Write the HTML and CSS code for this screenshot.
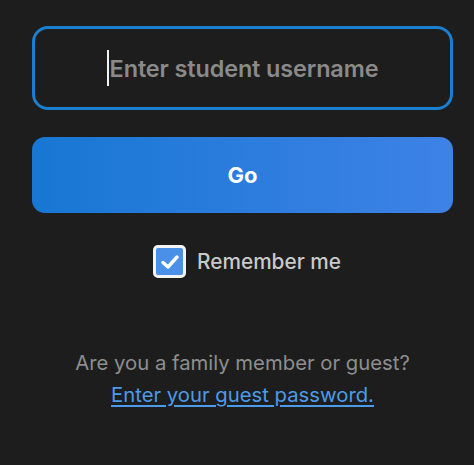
FILE: index.html
```html
<!DOCTYPE html>
<html lang="en">

<head>
    <meta charset="UTF-8">
    <meta name="viewport" content="width=device-width, initial-scale=1.0">
    <title>Student login</title>
    <link rel="stylesheet" href="styles.css">
</head>

<body>
    <section class="login">
        <div class="field">
            <span class="caret"></span>
            <span class="placeholder">Enter student username</span>
        </div>

        <button class="go" type="button">Go</button>

        <label class="remember">
            <span class="box">
                <svg width="20" height="16" viewBox="0 0 20 16">
                    <path d="M3 8.5 L8 13 L17 3" fill="none" stroke="#fff" stroke-width="3.4" stroke-linecap="round" stroke-linejoin="round" />
                </svg>
            </span>
            <span class="remember-text">Remember me</span>
        </label>

        <p class="guest">
            Are you a family member or guest?<br />
            <a href="#" class="guest-link">Enter your guest password.</a>
        </p>
    </section>
</body>

</html>
```

FILE: styles.css
```css
body {
    margin: 0;
    background-color: #1d1d1d;
    font-family: Inter, "Noto Sans", sans-serif;
}

.login {
    width: 421px;
    padding: 26px 0 0 32px;
    display: flex;
    flex-direction: column;
    align-items: stretch;
}

.field {
    box-sizing: border-box;
    height: 84px;
    border: 3px solid #1a7fcf;
    border-radius: 16px;
    display: flex;
    align-items: center;
    justify-content: center;
}

.caret {
    width: 2px;
    height: 36px;
    background-color: #f2f2f2;
    margin-right: 1px;
}

.placeholder {
    color: #8a8a8a;
    font-size: 23.4px;
    font-weight: 600;
    letter-spacing: -0.1px;
}

.go {
    margin-top: 27px;
    height: 76px;
    border: none;
    border-radius: 13px;
    background: linear-gradient(to right, #1877d3, #3e82e6);
    color: #fff;
    font-family: inherit;
    font-size: 22px;
    font-weight: 700;
}

.remember {
    margin-top: 32px;
    display: flex;
    align-items: center;
    justify-content: center;
    gap: 11px;
    padding-left: 9px;
}

.box {
    box-sizing: border-box;
    width: 33px;
    height: 33px;
    border: 3px solid #f4f4f4;
    border-radius: 5px;
    background-color: #4a8fe8;
    display: flex;
    align-items: center;
    justify-content: center;
}

.remember-text {
    color: #c9c9c9;
    font-size: 20.8px;
    font-weight: 500;
}

.guest {
    margin: 69px 0 0;
    text-align: center;
    color: #8e8e8e;
    font-size: 20.3px;
    line-height: 32px;
}

.guest-link {
    color: #4c9be9;
    text-decoration: underline;
    text-underline-offset: 3px;
}
```
